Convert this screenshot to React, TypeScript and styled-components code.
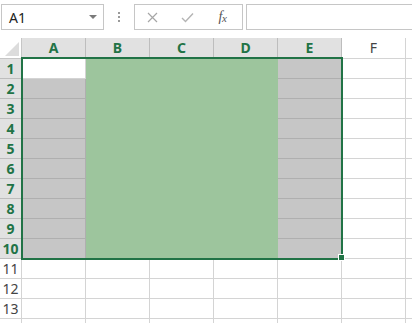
import React from 'react';
import styled, { createGlobalStyle } from 'styled-components';

type Fill = 'none' | 'gray' | 'green' | 'active';

const GlobalStyle = createGlobalStyle`
  html, body {
    margin: 0;
    padding: 0;
    background: #ffffff;
    overflow: hidden;
  }
  body {
    font-family: "Noto Sans", "Open Sans", Arial, sans-serif;
  }
`;

const Page = styled.div`
  width: 412px;
  height: 323px;
  overflow: hidden;
  background: #ffffff;
`;

const Toolbar = styled.div`
  display: flex;
  align-items: stretch;
  height: 26px;
  padding: 4px 0 0 1px;
`;

const NameBox = styled.div`
  box-sizing: border-box;
  width: 103px;
  display: flex;
  align-items: center;
  justify-content: space-between;
  padding: 0 6px 0 7px;
  border: 1px solid #c6c6c6;
  font-size: 14px;
  color: #222;
`;

const DropArrow = styled.span`
  width: 0;
  height: 0;
  border-left: 4px solid transparent;
  border-right: 4px solid transparent;
  border-top: 4px solid #7a7a7a;
`;

const Grip = styled.div`
  width: 30px;
  display: flex;
  flex-direction: column;
  align-items: center;
  justify-content: center;
  gap: 2px;
  span {
    width: 2px;
    height: 2px;
    background: #9a9a9a;
  }
`;

const FuncBox = styled.div`
  box-sizing: border-box;
  width: 109px;
  display: flex;
  border: 1px solid #c6c6c6;
`;

const FuncButton = styled.div`
  width: 35px;
  display: flex;
  align-items: center;
  justify-content: center;
`;

const Fx = styled.span`
  font-family: "Liberation Serif", "DejaVu Serif", serif;
  font-style: italic;
  font-size: 14px;
  color: #555;
  letter-spacing: -0.5px;
  sub {
    font-size: 11px;
    vertical-align: -1px;
  }
`;

const FormulaInput = styled.div`
  flex: 1;
  margin-left: 3px;
  border: 1px solid #c6c6c6;
  border-right: none;
`;

const Sheet = styled.div`
  position: relative;
  margin-top: 8px;
  display: grid;
  grid-template-columns: 22px repeat(7, 64px);
  grid-template-rows: 21px repeat(14, 20px);
`;

const Corner = styled.div`
  position: relative;
  box-sizing: border-box;
  background: #ffffff;
  border-right: 1px solid #c6c6c6;
  border-bottom: 1px solid #c6c6c6;
  &::after {
    content: '';
    position: absolute;
    right: 2px;
    bottom: 2px;
    border-left: 14px solid transparent;
    border-bottom: 14px solid #dcdcdc;
  }
`;

const Header = styled.div<{ $selected: boolean }>`
  box-sizing: border-box;
  display: flex;
  align-items: center;
  justify-content: center;
  font-size: 14px;
  line-height: 1;
  background: ${(p) => (p.$selected ? '#e1e1e1' : '#ffffff')};
  color: ${(p) => (p.$selected ? '#217346' : '#444444')};
  font-weight: ${(p) => (p.$selected ? 700 : 400)};
  border-right: 1px solid ${(p) => (p.$selected ? '#bdbdbd' : '#d4d4d4')};
  border-bottom: 1px solid ${(p) => (p.$selected ? '#bdbdbd' : '#d4d4d4')};
`;

const fillColor: Record<Fill, string> = {
  none: '#ffffff',
  active: '#ffffff',
  gray: '#c6c6c6',
  green: '#9dc59d',
};

const lineColor: Record<Fill, string> = {
  none: '#d4d4d4',
  active: '#d4d4d4',
  gray: '#afafaf',
  green: '#9dc59d',
};

const Cell = styled.div<{ $fill: Fill }>`
  box-sizing: border-box;
  background: ${(p) => fillColor[p.$fill]};
  border-right: 1px solid ${(p) => lineColor[p.$fill]};
  border-bottom: 1px solid ${(p) => lineColor[p.$fill]};
`;

const Selection = styled.div`
  position: absolute;
  left: 21px;
  top: 19px;
  width: 322px;
  height: 203px;
  box-sizing: border-box;
  border: 2px solid #217346;
  pointer-events: none;
`;

const FillHandle = styled.div`
  position: absolute;
  left: 338px;
  top: 216px;
  width: 5px;
  height: 5px;
  background: #217346;
  border: 1px solid #ffffff;
`;

// G and row 14 are only partly in view, so their labels fall outside the window
const columns = ['A', 'B', 'C', 'D', 'E', 'F', ''];
const rows = Array.from({ length: 14 }, (_, i) => i + 1);

const fillFor = (row: number, col: number): Fill => {
  if (row > 10 || col > 4) return 'none';
  if (row === 1 && col === 0) return 'active';
  if (col === 0 || col === 4) return 'gray';
  return 'green';
};

function CancelIcon() {
  return (
    <svg width="11" height="11" viewBox="0 0 11 11">
      <path d="M1 1L10 10M10 1L1 10" stroke="#a6a6a6" strokeWidth="1.2" fill="none" />
    </svg>
  );
}

function EnterIcon() {
  return (
    <svg width="13" height="11" viewBox="0 0 13 11">
      <path d="M1 6L4.5 9.5L12 1.5" stroke="#b4b4b4" strokeWidth="1.4" fill="none" />
    </svg>
  );
}

export default function App() {
  return (
    <Page>
      <GlobalStyle />
      <Toolbar>
        <NameBox>
          A1
          <DropArrow />
        </NameBox>
        <Grip>
          <span />
          <span />
          <span />
        </Grip>
        <FuncBox>
          <FuncButton>
            <CancelIcon />
          </FuncButton>
          <FuncButton>
            <EnterIcon />
          </FuncButton>
          <FuncButton>
            <Fx>
              f<sub>x</sub>
            </Fx>
          </FuncButton>
        </FuncBox>
        <FormulaInput />
      </Toolbar>
      <Sheet>
        <Corner />
        {columns.map((c, i) => (
          <Header key={i} $selected={i < 5}>
            {c}
          </Header>
        ))}
        {rows.map((r) => (
          <React.Fragment key={r}>
            <Header $selected={r <= 10}>{r < 14 ? r : ''}</Header>
            {columns.map((_, ci) => (
              <Cell key={ci} $fill={fillFor(r, ci)} />
            ))}
          </React.Fragment>
        ))}
        <Selection />
        <FillHandle />
      </Sheet>
    </Page>
  );
}
